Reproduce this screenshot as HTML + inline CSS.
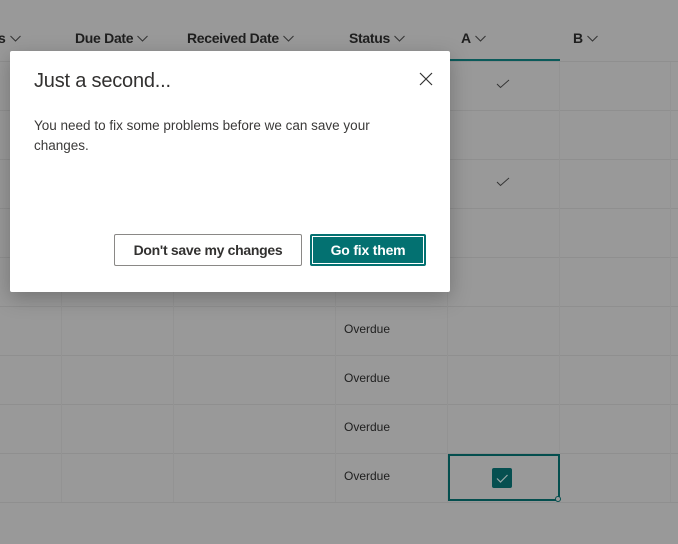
<!DOCTYPE html>
<html><head><style>
body{margin:0;width:678px;height:544px;background:#999;position:relative;overflow:hidden;font-family:"Liberation Sans",sans-serif;}
.h{position:absolute;top:30px;font-size:14px;font-weight:bold;color:#1f1f1f;letter-spacing:-0.3px;}
.h svg{margin-left:4px;vertical-align:1px}
.hl{position:absolute;left:0;width:678px;height:1px;background:#8f8f8f;}
.vl{position:absolute;width:1px;background:#939393;}
.ov{position:absolute;left:344px;font-size:12px;color:#1f1f1f;}
.ck{position:absolute;left:496px;}
</style></head><body>
<div class="h" style="left:-2px">s<svg width="11" height="7"><path d="M0.5 1l5 5 5-5" stroke="#333" fill="none"/></svg></div>
<div class="h" style="left:75px">Due Date<svg width="11" height="7"><path d="M0.5 1l5 5 5-5" stroke="#333" fill="none"/></svg></div>
<div class="h" style="left:187px">Received Date<svg width="11" height="7"><path d="M0.5 1l5 5 5-5" stroke="#333" fill="none"/></svg></div>
<div class="h" style="left:349px">Status<svg width="11" height="7"><path d="M0.5 1l5 5 5-5" stroke="#333" fill="none"/></svg></div>
<div class="h" style="left:461px">A<svg width="11" height="7"><path d="M0.5 1l5 5 5-5" stroke="#333" fill="none"/></svg></div>
<div class="h" style="left:573px">B<svg width="11" height="7"><path d="M0.5 1l5 5 5-5" stroke="#333" fill="none"/></svg></div>
<div style="position:absolute;left:448px;top:59px;width:112px;height:2px;background:#0b5a5a"></div>
<div class="hl" style="top:61px"></div>
<div class="hl" style="top:110px"></div>
<div class="hl" style="top:159px"></div>
<div class="hl" style="top:208px"></div>
<div class="hl" style="top:257px"></div>
<div class="hl" style="top:306px"></div>
<div class="hl" style="top:355px"></div>
<div class="hl" style="top:404px"></div>
<div class="hl" style="top:453px"></div>
<div class="hl" style="top:502px"></div>
<div class="vl" style="left:61px;top:62px;height:440px"></div>
<div class="vl" style="left:173px;top:62px;height:440px"></div>
<div class="vl" style="left:335px;top:62px;height:440px"></div>
<div class="vl" style="left:447px;top:62px;height:440px"></div>
<div class="vl" style="left:559px;top:62px;height:440px"></div>
<div class="vl" style="left:670px;top:62px;height:440px"></div>
<svg class="ck" style="top:79px" width="14" height="10"><path d="M1 5l3.5 3.5L13 1" stroke="#333" fill="none"/></svg>
<svg class="ck" style="top:177px" width="14" height="10"><path d="M1 5l3.5 3.5L13 1" stroke="#333" fill="none"/></svg>
<div class="ov" style="top:322px">Overdue</div>
<div class="ov" style="top:371px">Overdue</div>
<div class="ov" style="top:420px">Overdue</div>
<div class="ov" style="top:469px">Overdue</div>
<div style="position:absolute;left:448px;top:454px;width:108px;height:43px;border:2px solid #044e4e;background:#999"></div>
<div style="position:absolute;left:555px;top:496px;width:4px;height:4px;border:1px solid #044e4e;border-radius:50%;background:#999"></div>
<div style="position:absolute;left:492px;top:468px;width:20px;height:20px;background:#064f50;border-radius:2px"><svg width="20" height="20"><path d="M5 10.5l3.5 3.5 7-7" stroke="#9aa" stroke-width="1.2" fill="none"/></svg></div>
<div style="position:absolute;left:10px;top:51px;width:440px;height:241px;background:#fff;box-shadow:0 6px 20px rgba(0,0,0,.25);border-radius:2px">
<div style="position:absolute;left:24px;top:19px;font-size:20px;color:#323130;letter-spacing:-0.2px">Just a second...</div>
<svg style="position:absolute;left:409px;top:21px" width="14" height="14"><path d="M1 1L13 13M13 1L1 13" stroke="#333" stroke-width="1.2"/></svg>
<div style="position:absolute;left:24px;top:65px;width:370px;font-size:13.5px;line-height:20px;color:#3b3a39">You need to fix some problems before we can save your changes.</div>
<div style="position:absolute;left:104px;top:183px;width:186px;height:30px;border:1px solid #8a8886;border-radius:2px;font-size:14px;font-weight:bold;color:#323130;text-align:center;line-height:30px;letter-spacing:-0.3px">Don't save my changes</div>
<div style="position:absolute;left:300px;top:183px;width:116px;height:32px;background:#037171;border-radius:2px"><div style="position:absolute;inset:2px;border:1px solid #fff;color:#fff;font-size:14px;font-weight:bold;text-align:center;line-height:26px;letter-spacing:-0.2px">Go fix them</div></div>
</div>
</body></html>
